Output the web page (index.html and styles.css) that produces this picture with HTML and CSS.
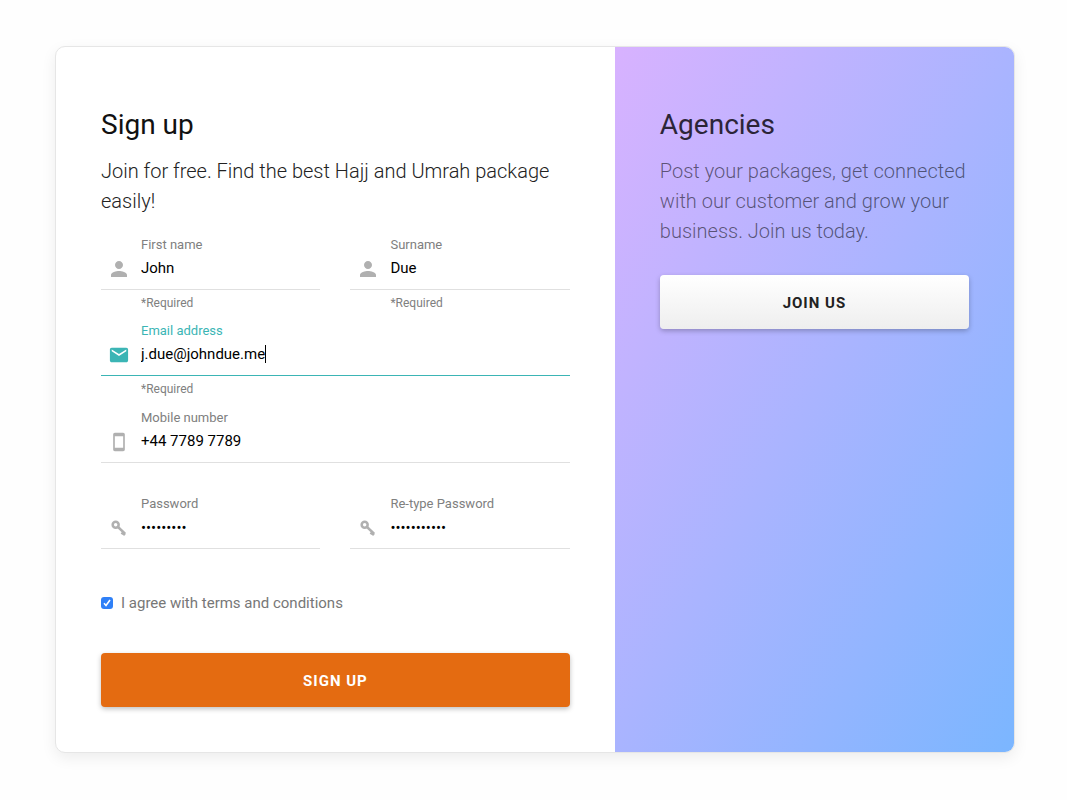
FILE: index.html
```html
<!DOCTYPE html>
<html lang="en">
<head>
    <meta charset="UTF-8">
    <meta name="viewport" content="width=device-width, initial-scale=1.0">
    <title>Sign up</title>
    <link rel="stylesheet" href="styles.css">
</head>
<body>
    <main class="card">
        <!-- Sign up form -->
        <section class="signup">
            <h1 class="title">Sign up</h1>
            <p class="lead">Join for free. Find the best Hajj and Umrah package easily!</p>

            <form class="form">
                <div class="row">
                    <div class="field">
                        <label for="first-name">First name</label>
                        <div class="control">
                            <svg class="icon" viewBox="2 2 20 20"><path d="M12 12c2.200 0 4-1.800 4-4s-1.800-4-4-4-4 1.800-4 4 1.800 4 4 4zm0 2c-2.700 0-8 1.300-8 4v2h16v-2c0-2.700-5.300-4-8-4z"/></svg>
                            <input type="text" id="first-name" value="John">
                        </div>
                        <span class="hint">*Required</span>
                    </div>
                    <div class="field">
                        <label for="surname">Surname</label>
                        <div class="control">
                            <svg class="icon" viewBox="2 2 20 20"><path d="M12 12c2.200 0 4-1.800 4-4s-1.800-4-4-4-4 1.800-4 4 1.800 4 4 4zm0 2c-2.700 0-8 1.300-8 4v2h16v-2c0-2.700-5.300-4-8-4z"/></svg>
                            <input type="text" id="surname" value="Due">
                        </div>
                        <span class="hint">*Required</span>
                    </div>
                </div>

                <div class="field active">
                    <label for="email">Email address</label>
                    <div class="control">
                        <svg class="icon" viewBox="1 1 22 22"><path d="M20 4H4c-1.100 0-2 .9-2 2v12c0 1.100.9 2 2 2h16c1.100 0 2-.9 2-2V6c0-1.100-.9-2-2-2zm0 4l-8 5-8-5V6l8 5 8-5v2z"/></svg>
                        <input type="email" id="email" value="j.due@johndue.me">
                        <span class="caret"></span>
                    </div>
                    <span class="hint">*Required</span>
                </div>

                <div class="field">
                    <label for="mobile">Mobile number</label>
                    <div class="control">
                        <svg class="icon" viewBox="0 0 24 24"><path d="M17 1H7c-1.100 0-2 .9-2 2v18c0 1.100.9 2 2 2h10c1.100 0 2-.9 2-2V3c0-1.100-.9-2-2-2zm0 18H7V5h10v14z"/></svg>
                        <input type="tel" id="mobile" value="+44 7789 7789">
                    </div>
                </div>

                <div class="row">
                    <div class="field">
                        <label for="password">Password</label>
                        <div class="control">
                            <svg class="icon icon-key" viewBox="0 0 24 24"><circle cx="8" cy="8" r="3.600"/><path d="M10.500 10.500l9 8.500M17.300 16.300l-2 3.400M19 18.500l-2 2"/></svg>
                            <input type="password" id="password" value="johndue12">
                        </div>
                    </div>
                    <div class="field">
                        <label for="password-repeat">Re-type Password</label>
                        <div class="control">
                            <svg class="icon icon-key" viewBox="0 0 24 24"><circle cx="8" cy="8" r="3.600"/><path d="M10.500 10.500l9 8.500M17.300 16.300l-2 3.400M19 18.500l-2 2"/></svg>
                            <input type="password" id="password-repeat" value="johndue1234">
                        </div>
                    </div>
                </div>

                <div class="terms">
                    <input type="checkbox" id="terms" checked>
                    <label for="terms">I agree with terms and conditions</label>
                </div>

                <button type="submit" class="btn btn-primary">SIGN UP</button>
            </form>
        </section>

        <!-- Agencies -->
        <aside class="agencies">
            <h2 class="title">Agencies</h2>
            <p class="lead">Post your packages, get connected with our customer and grow your business. Join us today.</p>
            <button type="button" class="btn btn-light">JOIN US</button>
        </aside>
    </main>
</body>
</html>
```

FILE: styles.css
```css
* {
    box-sizing: border-box;
}

body {
    margin: 0;
    padding: 46px 52px 46px 55px;
    background-color: #fefefe;
    font-family: Roboto, sans-serif;
    color: #111;
}

.card {
    display: flex;
    border: 1px solid #e6e6e6;
    border-radius: 10px;
    background-color: #fff;
    box-shadow: 0 5px 15px rgba(0, 0, 0, 0.07);
    overflow: hidden;
}

.signup,
.agencies {
    padding: 60px 45px 45px;
    min-width: 0;
}

.signup {
    flex: 0 0 58.3333%;
}

.agencies {
    flex: 1;
    background: linear-gradient(120deg, #d8b2ff, #7bb6ff);
}

.title {
    margin: 0 0 13px;
    font-size: 28px;
    font-weight: 400;
    line-height: 36px;
}

.lead {
    margin: 0 0 20px;
    font-size: 20px;
    font-weight: 300;
    line-height: 30px;
    color: #222;
}

.agencies .title {
    color: #2c2538;
}

.agencies .lead {
    margin-bottom: 29px;
    color: rgba(0, 0, 0, 0.55);
}

.row {
    display: flex;
    gap: 30px;
}

.field {
    flex: 1;
    min-width: 0;
    min-height: 86px;
}

.field label {
    display: block;
    margin-left: 40px;
    font-size: 13px;
    line-height: 18px;
    color: #808080;
}

.control {
    display: flex;
    align-items: center;
    padding: 2px 0 9px;
    border-bottom: 1px solid #e0e0e0;
}

.icon {
    flex: none;
    width: 20px;
    height: 20px;
    margin: 2px 12px 0 8px;
    fill: #b0b0b0;
}

.icon-key {
    fill: none;
    stroke: #b0b0b0;
    stroke-width: 3;
}

.control input {
    flex: 1;
    min-width: 0;
    height: 24px;
    padding: 0;
    border: none;
    outline: none;
    background: none;
    font-family: inherit;
    font-size: 15px;
    color: #000;
}

.control input[type="password"] {
    padding-top: 2px;
}

.hint {
    display: block;
    margin: 5px 0 0 40px;
    font-size: 12px;
    line-height: 16px;
    color: #808080;
}

.active {
    min-height: 87px;
}

.active label {
    color: #3bb5b5;
}

.active .control {
    border-color: #3bb5b5;
}

.active .icon {
    fill: #3bb5b5;
}

.active input {
    flex: none;
    field-sizing: content;
}

.caret {
    width: 1px;
    height: 18px;
    background-color: #000;
}

.terms {
    display: flex;
    align-items: center;
    gap: 8px;
    margin: 12px 0 40px;
    font-size: 15px;
    line-height: 20px;
    color: #777;
}

.terms input {
    appearance: none;
    width: 12px;
    height: 12px;
    margin: 0;
    border-radius: 3px;
    background: #2f80f7 url("data:image/svg+xml,%3Csvg xmlns='http://www.w3.org/2000/svg' viewBox='0 0 12 12'%3E%3Cpath d='M3 6.300l2 2.200 4-5.500' fill='none' stroke='white' stroke-width='1.600'/%3E%3C/svg%3E");
}

.btn {
    display: block;
    width: 100%;
    height: 54px;
    padding: 2px 0 0;
    border: none;
    border-radius: 4px;
    font-family: inherit;
    font-size: 15px;
    font-weight: 700;
    letter-spacing: 1px;
    cursor: pointer;
    box-shadow: 0 2px 5px rgba(0, 0, 0, 0.25);
}

.btn-primary {
    background-color: #e46b11;
    color: #fff;
}

.btn-light {
    background: linear-gradient(#fff, #eee);
    color: #222;
}
```
